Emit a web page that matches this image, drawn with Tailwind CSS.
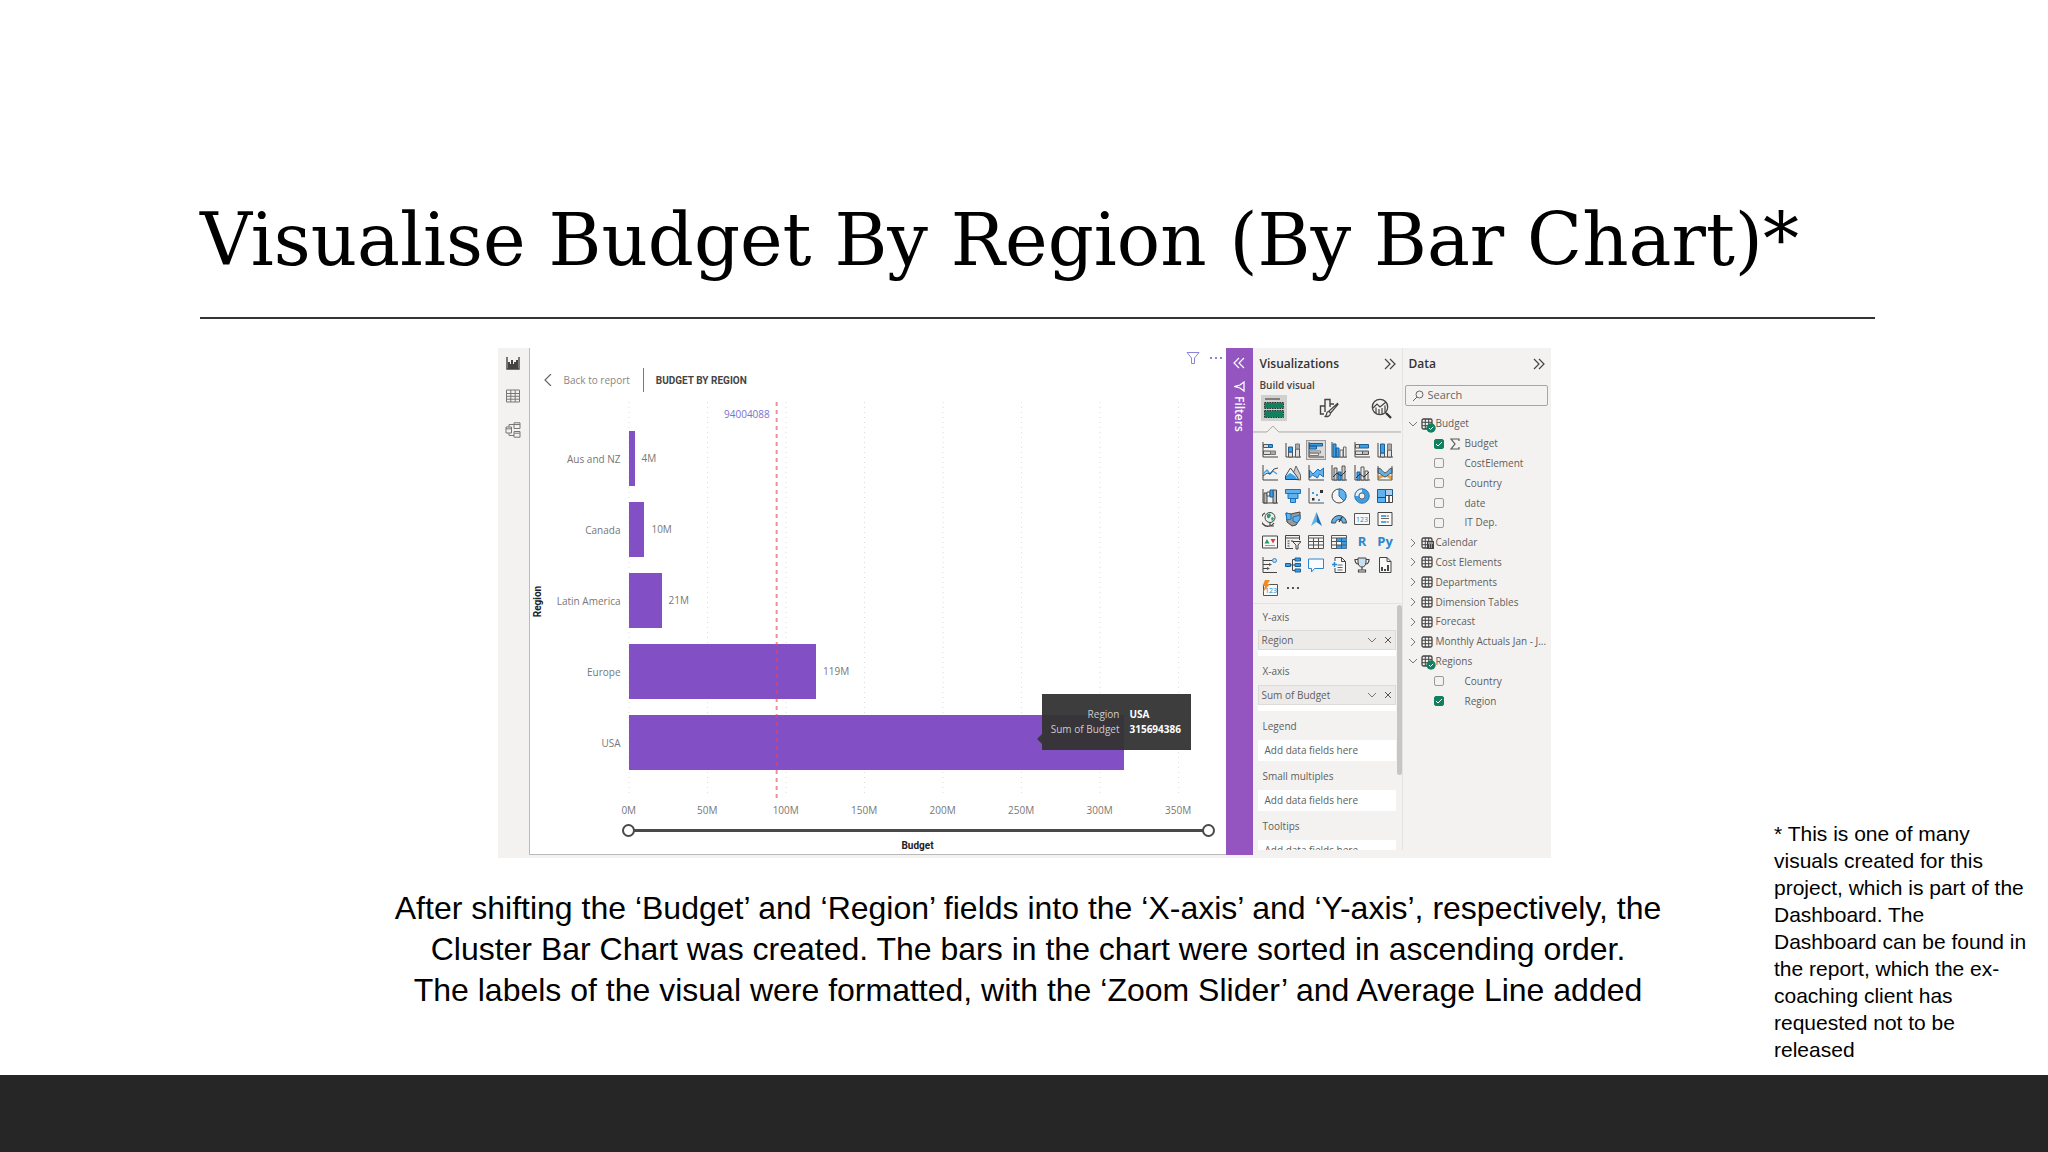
<!doctype html>
<html lang="en">
<head>
    <meta charset="UTF-8">
    <meta name="viewport" content="width=device-width, initial-scale=1.0">
    <script src="https://cdn.jsdelivr.net/npm/@tailwindcss/browser@4"></script>
    <title>Visualise Budget By Region</title>
</head>
<body class="bg-white text-black font-['Liberation_Sans',sans-serif]">
<!-- shared icons -->
<svg class="hidden">
    <symbol id="right" viewBox="0 0 8 10"><path d="M2 1l4 4-4 4" fill="none" stroke="#777"/></symbol>
    <symbol id="down" viewBox="0 0 10 8"><path d="M1 2l4 4 4-4" fill="none" stroke="#777"/></symbol>
    <symbol id="close" viewBox="0 0 8 8"><path d="M1 1l6 6M7 1l-6 6" fill="none" stroke="#555"/></symbol>
    <symbol id="expand" viewBox="0 0 12 12"><path d="M1 1l5 5-5 5M6 1l5 5-5 5" fill="none" stroke="#444" stroke-width="1.2"/></symbol>
    <symbol id="table" viewBox="0 0 12 12"><rect x="1" y="1" width="10" height="10" rx="1.5" fill="none" stroke="#444" stroke-width="1.3"/><path d="M4.3 1v10M7.7 1v10M1 4.3h10M1 7.7h10" stroke="#444"/></symbol>
    <symbol id="tick" viewBox="0 0 10 10"><circle cx="5" cy="5" r="4.7" fill="#11805f"/><path d="M3 5l1.5 1.5L7.2 3.8" fill="none" stroke="#fff"/></symbol>
</svg>
<div class="min-h-screen flex flex-col">
    <header class="ml-[200px] mr-[173px] pt-[192px] border-b-2 border-[#333]">
        <h1 class="h-[125px] leading-[96px] text-[72px] whitespace-nowrap font-['DejaVu_Serif',serif]">Visualise Budget By Region (By Bar Chart)*</h1>
    </header>
    <main class="grow grid grid-cols-[1fr_1300px_1fr] pt-[29px]">
        <div class="col-start-2">
            <figure class="mx-auto max-w-[1053px] h-[510px] flex bg-[#f3f2f1] font-['Open_Sans',sans-serif] text-[10px] text-[#605e5c]">
                <!-- view switcher -->
                <nav class="w-[31px] shrink-0 flex flex-col items-center pt-2 gap-[19px]">
                    <button aria-label="Report view"><svg class="size-[14px]" viewBox="0 0 14 14"><path d="M1 1v12h12V1" fill="none" stroke="#444" stroke-width="1.4"/><path d="M2 6h2v2h1V4h2v4h1V6h2V4h2v9H2z" fill="#444"/></svg></button>
                    <button aria-label="Table view"><svg class="size-[14px]" viewBox="0 0 14 14"><path d="M.5 1h13v12H.5zM.5 4.5h13M.5 7.3h13M.5 10.2h13M4.8 1v12M9.2 1v12" fill="none" stroke="#777"/></svg></button>
                    <button aria-label="Model view"><svg class="size-4" viewBox="0 0 16 16"><path d="M9 .8h6v5.7H9zM9 2.5h6M9 9.5h6v5.7H9zM9 11.2h6M1 5h5.5v6H1zM1 6.8h5.5M4 5V2.5h5M4 11v2.5h5" fill="none" stroke="#777"/></svg></button>
                </nav>
                <!-- report canvas -->
                <section class="relative grow mb-[3px] bg-white border-l border-b border-[#bbb]">
                    <div class="absolute right-1 top-[3px] flex items-center gap-[10px]">
                        <button aria-label="Filters on this visual"><svg class="size-[14px]" viewBox="0 0 14 14"><path d="M1 1.5h12L8.5 7v5.5h-3V7z" fill="none" stroke="#8b84d7"/></svg></button>
                        <button aria-label="More options"><svg class="w-3 h-[14px]" viewBox="0 0 12 14"><path d="M0 6h2v2H0zM5 6h2v2H5zM10 6h2v2h-2z" fill="#8b84d7"/></svg></button>
                    </div>
                    <div class="flex items-center h-6 mt-5 pl-[14px]">
                        <button class="flex items-center gap-3 text-[#888]">
                            <svg class="w-2 h-3" viewBox="0 0 8 12"><path d="M7 0L1 6l6 6" fill="none" stroke="#666" stroke-width="1.2"/></svg>
                            Back to report
                        </button>
                        <span class="ml-[13px] mr-3 w-px h-6 bg-[#777]"></span>
                        <h2 class="font-bold text-[#444] font-['Roboto',sans-serif]">BUDGET BY REGION</h2>
                    </div>
                    <div class="flex pt-[10px] pr-[18px]">
                        <div class="w-4 flex justify-center items-center">
                            <span class="-rotate-90 font-bold text-[#222] font-['Roboto',sans-serif]">Region</span>
                        </div>
                        <ul class="w-[83px] pt-[22px] pr-2 text-right text-[#777]">
                            <li class="h-[71px] leading-[71px]">Aus and NZ</li>
                            <li class="h-[71px] leading-[71px]">Canada</li>
                            <li class="h-[71px] leading-[71px]">Latin America</li>
                            <li class="h-[71px] leading-[71px]">Europe</li>
                            <li class="h-[71px] leading-[71px]">USA</li>
                        </ul>
                        <div class="relative grow h-[398px] pt-[21px] text-[#777]">
                            <svg class="absolute inset-0 size-full overflow-visible">
                                <g stroke="#ddd" stroke-dasharray="1 4">
                                    <line x1="0" x2="0" y2="395"/>
                                    <line x1="13.56%" x2="13.56%" y2="395"/>
                                    <line x1="27.12%" x2="27.12%" y2="395"/>
                                    <line x1="40.68%" x2="40.68%" y2="395"/>
                                    <line x1="54.24%" x2="54.24%" y2="395"/>
                                    <line x1="67.8%" x2="67.8%" y2="395"/>
                                    <line x1="81.36%" x2="81.36%" y2="395"/>
                                    <line x1="94.92%" x2="94.92%" y2="395"/>
                                </g>
                            </svg>
                            <div class="relative flex items-center gap-[7px] h-[71px]"><div class="h-[55px] bg-[#8250c4]" style="width:1.05%"></div>4M</div>
                            <div class="relative flex items-center gap-[7px] h-[71px]"><div class="h-[55px] bg-[#8250c4]" style="width:2.75%"></div>10M</div>
                            <div class="relative flex items-center gap-[7px] h-[71px]"><div class="h-[55px] bg-[#8250c4]" style="width:5.7%"></div>21M</div>
                            <div class="relative flex items-center gap-[7px] h-[71px]"><div class="h-[55px] bg-[#8250c4]" style="width:32.4%"></div>119M</div>
                            <div class="relative flex items-center gap-[7px] h-[71px]"><div class="h-[55px] bg-[#8250c4]" style="width:85.6%"></div></div>
                            <svg class="absolute inset-0 size-full overflow-visible">
                                <line x1="25.5%" x2="25.5%" y2="398" stroke="#e0465f" stroke-opacity=".6" stroke-width="2" stroke-dasharray="4 4"/>
                            </svg>
                            <span class="absolute top-[5px] right-[75.6%] text-[#7d70d0]">94004088</span>
                            <div class="absolute top-[292px] right-[17px] w-[149px] h-14 bg-[#333]/95 flex items-center">
                                <svg class="absolute -left-[5px] top-10 w-[5px] h-[10px]" viewBox="0 0 5 10"><path d="M5 0v10L0 5z" fill="#383838"/></svg>
                                <dl class="grow grid grid-cols-[78px_1fr] gap-x-[10px] leading-[15px] text-[#ccc]">
                                    <dt class="text-right whitespace-nowrap">Region</dt><dd class="font-bold text-white">USA</dd>
                                    <dt class="text-right whitespace-nowrap">Sum of Budget</dt><dd class="font-bold text-white">315694386</dd>
                                </dl>
                            </div>
                        </div>
                    </div>
                    <div class="ml-[60px] mr-[18px] flex h-5 leading-5 text-[#777]">
                        <span class="shrink-0 text-center" style="width:12.7%">0M</span>
                        <span class="shrink-0 text-center" style="width:12.7%">50M</span>
                        <span class="shrink-0 text-center" style="width:12.7%">100M</span>
                        <span class="shrink-0 text-center" style="width:12.7%">150M</span>
                        <span class="shrink-0 text-center" style="width:12.7%">200M</span>
                        <span class="shrink-0 text-center" style="width:12.7%">250M</span>
                        <span class="shrink-0 text-center" style="width:12.7%">300M</span>
                        <span class="shrink-0 text-center" style="width:12.7%">350M</span>
                    </div>
                    <!-- zoom slider -->
                    <div class="relative ml-[92px] mr-[11px] h-5 flex items-center">
                        <div class="grow mx-[6px] h-[3px] bg-[#484a48]"></div>
                        <input type="range" aria-label="Zoom from" min="0" max="100" value="0" class="absolute inset-0 w-full h-5 appearance-none bg-transparent pointer-events-none [&::-webkit-slider-thumb]:appearance-none [&::-webkit-slider-thumb]:pointer-events-auto [&::-webkit-slider-thumb]:size-[13px] [&::-webkit-slider-thumb]:rounded-full [&::-webkit-slider-thumb]:bg-white [&::-webkit-slider-thumb]:border-2 [&::-webkit-slider-thumb]:border-solid [&::-webkit-slider-thumb]:border-[#484a48]">
                        <input type="range" aria-label="Zoom to" min="0" max="100" value="100" class="absolute inset-0 w-full h-5 appearance-none bg-transparent pointer-events-none [&::-webkit-slider-thumb]:appearance-none [&::-webkit-slider-thumb]:pointer-events-auto [&::-webkit-slider-thumb]:size-[13px] [&::-webkit-slider-thumb]:rounded-full [&::-webkit-slider-thumb]:bg-white [&::-webkit-slider-thumb]:border-2 [&::-webkit-slider-thumb]:border-solid [&::-webkit-slider-thumb]:border-[#484a48]">
                    </div>
                    <p class="ml-[98px] mr-[18px] leading-[12px] text-center font-bold text-[#222] font-['Roboto',sans-serif]">Budget</p>
                </section>
                <!-- collapsed filters pane -->
                <button class="w-[27px] shrink-0 mb-[3px] pt-[9px] bg-[#9455c1] flex flex-col items-center text-white">
                    <svg class="size-3" viewBox="0 0 12 12"><path d="M6 1L1 6l5 5M11 1L6 6l5 5" fill="none" stroke="#fff" stroke-width="1.2"/></svg>
                    <svg class="mt-3 size-[11px]" viewBox="0 0 11 11"><path d="M10 1v9L6 7L1 5.500L6 4z" fill="none" stroke="#fff" stroke-width="1.3"/></svg>
                    <span class="mt-1 [writing-mode:vertical-rl] font-semibold text-[12px] leading-4">Filters</span>
                </button>
                <!-- visualizations pane -->
                <section class="w-[150px] shrink-0 flex flex-col mb-2 border-r border-[#e6e4e2] overflow-hidden">
                    <div class="flex items-center justify-between h-8 pl-[7px] pr-[6px] shrink-0">
                        <h2 class="text-[12px] font-semibold text-[#333]">Visualizations</h2>
                        <button aria-label="Collapse visualizations"><svg class="size-3"><use href="#expand"/></svg></button>
                    </div>
                    <h3 class="pl-[7px] h-[15px] shrink-0 leading-[10px] font-semibold text-[#444]">Build visual</h3>
                    <div class="flex items-center justify-between pl-2 pr-[10px] h-[26px] shrink-0">
                        <button aria-label="Build visual" class="size-[26px] bg-[#d2d0ce] flex items-center justify-center">
                            <svg class="size-[22px]" viewBox="0 0 22 22"><path d="M2 2h15" stroke="#555" stroke-width="1.3"/><path d="M1.5 5.5h19v6h-19zM1.5 13.500h19v7h-19z" fill="#11805f" stroke="#333" stroke-dasharray="1.5 1"/></svg>
                        </button>
                        <button aria-label="Format visual"><svg class="size-5" viewBox="0 0 20 20"><path d="M5 16H1.500V8H6V1.500h5V9M6 8v6M11 6h4" fill="none" stroke="#444" stroke-width="1.4"/><path d="M18.500 5.500L10 13l1.600 2L19 6.500zM10 13.300c-2 0-2.500 2-2.500 3.500-.5 1.200-1 1.500-2 1.700 3 .6 6-.5 6-3.300z" fill="#f3f2f1" stroke="#444" stroke-width="1.200"/></svg></button>
                        <button aria-label="Add further analyses"><svg class="size-[21px]" viewBox="0 0 21 21"><circle cx="9" cy="9" r="7.700" fill="none" stroke="#444" stroke-width="1.300"/><path d="M15 15l5 5" stroke="#333" stroke-width="2.300"/><path d="M2 10l4-4 3 3 6-5M5 9.500V15M8 11v5M11 10v6M14 7.500V14" fill="none" stroke="#444" stroke-width="1.200"/></svg></button>
                    </div>
                    <svg class="mt-1 w-full h-2 shrink-0" viewBox="0 0 150 8"><path d="M0 7H14L20 1l6 6H149" fill="#f3f2f1" stroke="#a8a6a4"/></svg>
                    <div class="mt-[5px] ml-[6px] shrink-0 grid grid-cols-[repeat(6,23px)] auto-rows-[23px] [&>button]:flex [&>button]:items-center [&>button]:justify-center [&_svg]:size-4">
                        <button aria-label="Stacked bar chart"><svg viewBox="0 0 16 16"><path d="M1 0v15h15" fill="none" stroke="#444"/><path d="M1.500 2.500h5v3h-5zM1.500 9h7v3.500h-7z" fill="#ddd" stroke="#555"/><path d="M6.500 2.500h4v3h-4z" fill="#3b9fe8" stroke="#1c5f96"/><path d="M8.500 9h5v3.500h-5z" fill="#aaa" stroke="#777"/></svg></button>
                        <button aria-label="Stacked column chart"><svg viewBox="0 0 16 16"><path d="M1 1v14h15" fill="none" stroke="#444"/><path d="M3.500 10h4v5h-4zM10.500 7h4v8h-4z" fill="#ddd" stroke="#555"/><path d="M3.500 5h4v5h-4z" fill="#3b9fe8" stroke="#1c5f96"/><path d="M10.500 2h4v5h-4z" fill="#aaa" stroke="#777"/></svg></button>
                        <button aria-label="Clustered bar chart"><span class="size-5 border border-[#999] bg-[#dcdad8] flex items-center justify-center"><svg viewBox="0 0 16 16"><path d="M1 0v15h15" fill="none" stroke="#444"/><path d="M1.500 1.500h13v2.500h-13zM1.500 4h7v3h-7z" fill="#3b9fe8" stroke="#1c5f96"/><path d="M1.500 9h11v2h-11zM1.500 11h9v2.500h-9z" fill="#eee" stroke="#777"/></svg></span></button>
                        <button aria-label="Clustered column chart"><svg viewBox="0 0 16 16"><path d="M1 0v15h15" fill="none" stroke="#444"/><path d="M2 2h3v13H2zM5 6h3v9H5z" fill="#3b9fe8" stroke="#1c5f96"/><path d="M9 8h3v7H9zM12.500 5h2.500v10h-2.500z" fill="#eee" stroke="#666"/></svg></button>
                        <button aria-label="100% stacked bar chart"><svg viewBox="0 0 16 16"><path d="M1 0v15h15" fill="none" stroke="#444"/><path d="M1.500 2.500h4v3.500h-4zM1.500 9h7v3.500h-7z" fill="#ddd" stroke="#555"/><path d="M5.500 2.500h9V6h-9z" fill="#3b9fe8" stroke="#1c5f96"/><path d="M8.500 9h6v3.500h-6z" fill="#bbb" stroke="#555"/></svg></button>
                        <button aria-label="100% stacked column chart"><svg viewBox="0 0 16 16"><path d="M1 1v14h15" fill="none" stroke="#444"/><path d="M3.500 11h4v4h-4zM10.500 8h4v7h-4z" fill="#ddd" stroke="#555"/><path d="M3.500 2h4v9h-4z" fill="#3b9fe8" stroke="#1c5f96"/><path d="M10.500 2h4v6h-4z" fill="#aaa" stroke="#777"/></svg></button>

                        <button aria-label="Line chart"><svg viewBox="0 0 16 16"><path d="M1 0v15h15" fill="none" stroke="#444"/><path d="M1 9l4-4 3 4 3-3 4 3" fill="none" stroke="#3b9fe8" stroke-width="1.300"/><path d="M1 11l4-3 3 1 4-5 4-1" fill="none" stroke="#444"/></svg></button>
                        <button aria-label="Area chart"><svg viewBox="0 0 16 16"><path d="M6 14l5-13 4.500 9v5z" fill="#ccc" stroke="#666"/><path d="M.500 14.500V11l5-8 6 8 2 3.500z" fill="#e9f4fd" stroke="#444"/><path d="M1 14v-3l4-3 5 3 2 3z" fill="#3b9fe8"/></svg></button>
                        <button aria-label="Stacked area chart"><svg viewBox="0 0 16 16"><path d="M1.500 5l3.500 4 5-5 2 2 3.500-3v9l-4-3-2 4-5-3-3 3z" fill="#5fb2ee" stroke="#1c72b8"/><path d="M1 0v15h15" fill="none" stroke="#444"/></svg></button>
                        <button aria-label="Line and stacked column chart"><svg viewBox="0 0 16 16"><path d="M1 0v15h15" fill="none" stroke="#444"/><path d="M3 3h3v12H3zM11 1h3v14h-3z" fill="#ccc" stroke="#555"/><path d="M7 7h3v8H7z" fill="#3b9fe8" stroke="#1c5f96"/><path d="M2 12l4-4 4 3 5-5" fill="none" stroke="#333"/></svg></button>
                        <button aria-label="Line and clustered column chart"><svg viewBox="0 0 16 16"><path d="M1 0v15h15" fill="none" stroke="#444"/><path d="M7 2h3v13H7zM11 6h3v9h-3z" fill="#eee" stroke="#555"/><path d="M3 7h3v8H3z" fill="#3b9fe8" stroke="#1c5f96"/><path d="M2 13l4-4 4 3 5-5" fill="none" stroke="#333"/></svg></button>
                        <button aria-label="Ribbon chart"><svg viewBox="0 0 16 16"><path d="M1 11c3 0 4-4 7-4s4 4 7 4v3.500c-3 0-4-3-7-3s-4 3-7 3z" fill="#e7a14a"/><path d="M1 3c4 0 5 5 7 5s4-5 7-5v5c-3 0-5 4-7 4s-4-4-7-4z" fill="#5fb2ee" stroke="#555"/><path d="M1 1v14h14V1" fill="none" stroke="#555"/></svg></button>

                        <button aria-label="Waterfall chart"><svg viewBox="0 0 16 16"><path d="M1 1v14h15" fill="none" stroke="#444"/><path d="M2 5h3v10H2zM11 2h3.500v13H11z" fill="#bbb" stroke="#444"/><path d="M5 4h3v4H5z" fill="#eee" stroke="#555"/><path d="M8 2h3v7H8z" fill="#3b9fe8" stroke="#1c5f96"/></svg></button>
                        <button aria-label="Funnel"><svg viewBox="0 0 16 16"><path d="M.500 1.500h15v4H.500zM3 5.500h10v5H3zM5.500 10.500h5v4h-5z" fill="#5fb2ee" stroke="#1c72b8"/></svg></button>
                        <button aria-label="Scatter chart"><svg viewBox="0 0 16 16"><path d="M1 0v15h15" fill="none" stroke="#555"/><path d="M4 4h2v2H4zM8 6h2v2H8zM10 11h2v2h-2z" fill="#3b9fe8"/><path d="M12 2h3v3h-3zM4 10h2.500v2.500H4z" fill="#333"/></svg></button>
                        <button aria-label="Pie chart"><svg viewBox="0 0 16 16"><circle cx="8" cy="8" r="7" fill="#f5f5f5" stroke="#444"/><path d="M8 8V1a7 7 0 0 1 5 12z" fill="#5fb2ee" stroke="#1c72b8"/></svg></button>
                        <button aria-label="Donut chart"><svg viewBox="0 0 16 16"><circle cx="8" cy="8" r="5.200" fill="none" stroke="#3b9fe8" stroke-width="4"/><path d="M2.800 8A5.200 5.200 0 0 1 8 2.800" fill="none" stroke="#eee" stroke-width="3"/><circle cx="8" cy="8" r="7.300" fill="none" stroke="#1c5f96" stroke-width=".8"/><circle cx="8" cy="8" r="3" fill="none" stroke="#444" stroke-width=".8"/></svg></button>
                        <button aria-label="Treemap"><svg viewBox="0 0 16 16"><path d="M.500 1.500h8v13h-8z" fill="#5fb2ee" stroke="#1c5f96"/><path d="M8.500 1.500h7v6h-7z" fill="#ace" stroke="#1c5f96"/><path d="M8.500 7.500H12v7H8.500zM12 7.500h3.500v7H12zM.500 9.500h8" fill="#fff" stroke="#444"/></svg></button>

                        <button aria-label="Map"><svg viewBox="0 0 16 16"><circle cx="8" cy="6.500" r="5" fill="#e6f2ea" stroke="#444"/><path d="M5 3.500l3-1 1 2-2 3-2-1zM9 7l2-1 1 2-2 2z" fill="#2f9a6b"/><path d="M3 2a7 7 0 1 0 9 10M8 12v3M4 15h8" fill="none" stroke="#444" stroke-width="1.200"/></svg></button>
                        <button aria-label="Filled map"><svg viewBox="0 0 16 16"><path d="M1 2l5 1 4-1 5-1v7l-4 6-4 1-5-4z" fill="#9a9a9a" stroke="#444"/><path d="M1 2l5 1v5L2 9zM8 6l7-2v4l-3 4-4-2z" fill="#5fb2ee" stroke="#1c72b8"/></svg></button>
                        <button aria-label="Azure map"><svg viewBox="0 0 16 16"><path d="M8.500 1L3 15l5.500-4z" fill="#57b7e8"/><path d="M8.500 1L14 15l-5.500-4z" fill="#1d6fb5"/></svg></button>
                        <button aria-label="Gauge"><svg viewBox="0 0 16 16"><path d="M.500 12a7.500 7.500 0 0 1 15 0h-4a3.500 3.500 0 0 0-7 0z" fill="#5fb2ee" stroke="#444"/><path d="M8 11l3-5" stroke="#333" stroke-width="1.400"/></svg></button>
                        <button aria-label="Card"><svg viewBox="0 0 16 16"><path d="M.500 2.500h15v11H.500z" fill="#f8f8f8" stroke="#555"/><text x="8" y="11" text-anchor="middle" font-size="7" fill="#2b86cc">123</text></svg></button>
                        <button aria-label="Multi-row card"><svg viewBox="0 0 16 16"><path d="M1 1.500h14v13H1z" fill="#f8f8f8" stroke="#444"/><path d="M4 5h5M4 11h5" stroke="#2b86cc" stroke-width="1.500"/><path d="M4 7.500h8M9.500 5H12M9.500 11H12" stroke="#666"/></svg></button>

                        <button aria-label="KPI"><svg viewBox="0 0 16 16"><path d="M.500 2h15v12H.500z" fill="#f8f8f8" stroke="#444"/><path d="M2.500 9.500L5 5l2.500 4.500z" fill="#2f9a5b"/><path d="M8.500 5h5L11 9.500z" fill="#d8404a"/><path d="M3 11.500h10" stroke="#999"/></svg></button>
                        <button aria-label="Slicer"><svg viewBox="0 0 16 16"><path d="M14.500 6V1.500H.500v13H8M.500 4h14" fill="none" stroke="#444"/><path d="M2.500 7h2M2.500 9.500h2M2.500 12h2M6 7h2" stroke="#777" stroke-width="1.400"/><path d="M7.500 7.500H16l-3 3.500v4h-2v-4z" fill="#eee" stroke="#444"/></svg></button>
                        <button aria-label="Table"><svg viewBox="0 0 16 16"><path d="M.500 1.500h15v13H.500zM.500 4h15M.500 7.500h15M.500 11h15M5.500 4v10.500M10.500 4v10.500" fill="#f8f8f8" stroke="#555"/></svg></button>
                        <button aria-label="Matrix"><svg viewBox="0 0 16 16"><path d="M.500 1.500h15v13H.500z" fill="#f8f8f8" stroke="#555"/><path d="M10.500 4h5v10.500h-5zM5.500 11h5v3.500h-5zM5.500 4h5v3.500h-5z" fill="#3b9fe8"/><path d="M.500 4h15M.500 7.500h15M.500 11h15M5.500 4v10.500M10.500 4v10.500" stroke="#555"/></svg></button>
                        <button class="font-bold text-[13px] text-[#2b86cc]">R</button>
                        <button class="font-bold text-[13px] text-[#2b86cc]">Py</button>

                        <button aria-label="Key influencers"><svg viewBox="0 0 16 16"><path d="M1 0v15.500h14M1 3.500h9M1 7.500h7M1 11.500h5" fill="none" stroke="#444"/><circle cx="12.500" cy="3.500" r="2" fill="#bde" stroke="#2b86cc"/><path d="M7 6l3 1.500L7 9zM5 10l3 1.500L5 13z" fill="#555"/></svg></button>
                        <button aria-label="Decomposition tree"><svg viewBox="0 0 16 16"><path d="M5 8h5M7.500 2.500v11M7.500 2.500H10M7.500 13.500H10" fill="none" stroke="#444"/><path d="M.500 6.500h5v3h-5zM10 1h5.500v3H10zM10 6.500h5.500v3H10zM10 12h5.500v3H10z" fill="#3b9fe8" stroke="#1c5f96"/></svg></button>
                        <button aria-label="Q&amp;A"><svg viewBox="0 0 16 16"><path d="M.500 2h15v9.500H6.500L3.500 15v-3.500h-3z" fill="#f8fbff" stroke="#2b86cc"/></svg></button>
                        <button aria-label="Narrative"><svg viewBox="0 0 16 16"><path d="M4 4V.500h6.500l4 4v11H4V11M10.500.500v4h4" fill="#f8f8f8" stroke="#444"/><path d="M6.500 8h5M6.500 10.500h5M6.500 13h5" stroke="#666"/><path d="M1 7.500h5M3.500 5v5" stroke="#2b86cc" stroke-width="1.500"/></svg></button>
                        <button aria-label="Goals"><svg viewBox="0 0 16 16"><path d="M4 1h8v4c0 3-1.500 5-4 5S4 8 4 5z" fill="#c9def0" stroke="#444"/><path d="M4 2.500H1C1 5 2 7 4.500 7M12 2.500h3C15 5 14 7 11.500 7M8 10v3M4.500 15v-2h7v2z" fill="none" stroke="#444" stroke-width="1.200"/></svg></button>
                        <button aria-label="Paginated report"><svg viewBox="0 0 16 16"><path d="M2.500.500h7.500l4 4v11H2.500zM10 .500v4h4" fill="#f8f8f8" stroke="#444"/><path d="M5 10v4M8 12v2M11 8v6" stroke="#333" stroke-width="1.800"/></svg></button>

                        <button aria-label="Power Apps"><svg viewBox="0 0 16 16"><path d="M1.500 4.500h14v11h-14z" fill="#f8f8f8" stroke="#555"/><text x="9" y="13" text-anchor="middle" font-size="7" fill="#2b86cc">123</text><path d="M3 0h5L5.500 4H8L1 12l2-6H.500z" fill="#f08a24"/></svg></button>
                        <button aria-label="Get more visuals"><svg viewBox="0 0 16 16"><path d="M2 7h2v2H2zM7 7h2v2H7zM12 7h2v2h-2z" fill="#555"/></svg></button>
                    </div>
                    <!-- field wells -->
                    <div class="mt-1 flex border-t border-[#e4e2e0] pl-[5px] min-h-0">
                        <div class="grow">
                            <h4 class="pl-[5px] h-[26px] leading-[26px]">Y-axis</h4>
                            <div class="bg-white pb-[6px]">
                                <div class="flex items-center h-5 px-[3px] gap-[7px] bg-[#edebe9] border border-[#dddbd9]"><span class="grow">Region</span><button aria-label="Region options"><svg class="w-[10px] h-2"><use href="#down"/></svg></button><button aria-label="Remove Region"><svg class="size-2"><use href="#close"/></svg></button></div>
                            </div>
                            <h4 class="pl-[5px] h-[29px] leading-[31px]">X-axis</h4>
                            <div class="bg-white pb-[6px]">
                                <div class="flex items-center h-5 px-[3px] gap-[7px] bg-[#edebe9] border border-[#dddbd9]"><span class="grow whitespace-nowrap">Sum of Budget</span><button aria-label="Sum of Budget options"><svg class="w-[10px] h-2"><use href="#down"/></svg></button><button aria-label="Remove Sum of Budget"><svg class="size-2"><use href="#close"/></svg></button></div>
                            </div>
                            <h4 class="pl-[5px] h-[29px] leading-[31px]">Legend</h4>
                            <p class="h-[21px] leading-[20px] pl-[7px] bg-white">Add data fields here</p>
                            <h4 class="pl-[5px] h-[29px] leading-[31px]">Small multiples</h4>
                            <p class="h-[21px] leading-[20px] pl-[7px] bg-white">Add data fields here</p>
                            <h4 class="pl-[5px] h-[29px] leading-[31px]">Tooltips</h4>
                            <p class="h-[21px] leading-[20px] pl-[7px] bg-white">Add data fields here</p>
                        </div>
                        <div class="w-[5px] ml-px mt-px h-[170px] rounded-full bg-[#c8c6c4]"></div>
                    </div>
                </section>
                <!-- data pane -->
                <section class="w-[148px] shrink-0">
                    <div class="flex items-center justify-between h-8 px-[6px]">
                        <h2 class="text-[12px] font-semibold text-[#333]">Data</h2>
                        <button aria-label="Collapse data"><svg class="size-3"><use href="#expand"/></svg></button>
                    </div>
                    <label class="mt-[5px] ml-[2px] mr-[3px] h-[21px] flex items-center gap-1 px-[6px] border border-[#a8a6a4] rounded-xs">
                        <svg class="size-3 shrink-0" viewBox="0 0 12 12"><circle cx="7.500" cy="4.500" r="3.500" fill="none" stroke="#666"/><path d="M5 7L1 11" stroke="#666"/></svg>
                        <input type="text" placeholder="Search" aria-label="Search" class="w-full text-[11px] outline-none placeholder:text-[#666]">
                    </label>
                    <ul class="mt-2 h-[297px] grid auto-rows-fr [&>li]:flex [&>li]:items-center [&>li]:whitespace-nowrap">
                        <li class="pl-[5px]"><svg class="w-[10px] h-2"><use href="#down"/></svg><span class="relative mx-[3px]"><svg class="size-3"><use href="#table"/></svg><svg class="absolute left-[5px] top-[5px] size-[10px]"><use href="#tick"/></svg></span>Budget</li>
                        <li class="pl-[31px]"><input id="budget" type="checkbox" checked class="size-[10px] appearance-none rounded-xs border border-[#999] checked:border-[#11805f] checked:bg-[#11805f]"><svg class="-ml-[10px] size-[10px] pointer-events-none" viewBox="0 0 10 10"><path d="M2 5l2 2 4-4" fill="none" stroke="#fff"/></svg><svg class="ml-[6px] mr-[5px] w-[10px] h-3" viewBox="0 0 10 12"><path d="M9 3V1H1l4 5-4 5h8V9" fill="none" stroke="#555" stroke-width="1.200"/></svg><label for="budget">Budget</label></li>
                        <li class="pl-[31px] gap-[21px]"><input id="cost" type="checkbox" class="size-[10px] appearance-none rounded-xs border border-[#999]"><label for="cost">CostElement</label></li>
                        <li class="pl-[31px] gap-[21px]"><input id="country" type="checkbox" class="size-[10px] appearance-none rounded-xs border border-[#999]"><label for="country">Country</label></li>
                        <li class="pl-[31px] gap-[21px]"><input id="date" type="checkbox" class="size-[10px] appearance-none rounded-xs border border-[#999]"><label for="date">date</label></li>
                        <li class="pl-[31px] gap-[21px]"><input id="itdep" type="checkbox" class="size-[10px] appearance-none rounded-xs border border-[#999]"><label for="itdep">IT Dep.</label></li>
                        <li class="pl-[5px]"><svg class="mx-px w-2 h-[10px]"><use href="#right"/></svg><span class="relative mx-[3px]"><svg class="size-3"><use href="#table"/></svg><svg class="absolute left-[6px] top-1 w-[7px] h-2" viewBox="0 0 7 8"><path d="M0 0h7v8H0z" fill="#444"/><path d="M1 2h5M2 4h1M4 4h1M2 6h1M4 6h1" stroke="#eee"/></svg></span>Calendar</li>
                        <li class="pl-[5px]"><svg class="mx-px w-2 h-[10px]"><use href="#right"/></svg><svg class="mx-[3px] size-3"><use href="#table"/></svg>Cost Elements</li>
                        <li class="pl-[5px]"><svg class="mx-px w-2 h-[10px]"><use href="#right"/></svg><svg class="mx-[3px] size-3"><use href="#table"/></svg>Departments</li>
                        <li class="pl-[5px]"><svg class="mx-px w-2 h-[10px]"><use href="#right"/></svg><svg class="mx-[3px] size-3"><use href="#table"/></svg>Dimension Tables</li>
                        <li class="pl-[5px]"><svg class="mx-px w-2 h-[10px]"><use href="#right"/></svg><svg class="mx-[3px] size-3"><use href="#table"/></svg>Forecast</li>
                        <li class="pl-[5px]"><svg class="mx-px w-2 h-[10px]"><use href="#right"/></svg><svg class="mx-[3px] size-3"><use href="#table"/></svg>Monthly Actuals Jan - J...</li>
                        <li class="pl-[5px]"><svg class="w-[10px] h-2"><use href="#down"/></svg><span class="relative mx-[3px]"><svg class="size-3"><use href="#table"/></svg><svg class="absolute left-[5px] top-[5px] size-[10px]"><use href="#tick"/></svg></span>Regions</li>
                        <li class="pl-[31px] gap-[21px]"><input id="rcountry" type="checkbox" class="size-[10px] appearance-none rounded-xs border border-[#999]"><label for="rcountry">Country</label></li>
                        <li class="pl-[31px]"><input id="region" type="checkbox" checked class="size-[10px] appearance-none rounded-xs border border-[#999] checked:border-[#11805f] checked:bg-[#11805f]"><svg class="-ml-[10px] mr-[21px] size-[10px] pointer-events-none" viewBox="0 0 10 10"><path d="M2 5l2 2 4-4" fill="none" stroke="#fff"/></svg><label for="region">Region</label></li>
                    </ul>
                </section>
            </figure>
            <p class="mt-[30px] pl-2 text-center text-[32px] leading-[41px]">
                After shifting the ‘Budget’ and ‘Region’ fields into the ‘X-axis’ and ‘Y-axis’, respectively, the<br>
                Cluster Bar Chart was created. The bars in the chart were sorted in ascending order.<br>
                The labels of the visual were formatted, with the ‘Zoom Slider’ and Average Line added
            </p>
        </div>
        <aside class="self-end pl-[100px] pb-3 text-[21px] leading-[27px] whitespace-nowrap">
            * This is one of many<br>
            visuals created for this<br>
            project, which is part of the<br>
            Dashboard. The<br>
            Dashboard can be found in<br>
            the report, which the ex-<br>
            coaching client has<br>
            requested not to be<br>
            released
        </aside>
    </main>
    <footer class="h-[77px] bg-[#262626]"></footer>
</div>
</body>
</html>
